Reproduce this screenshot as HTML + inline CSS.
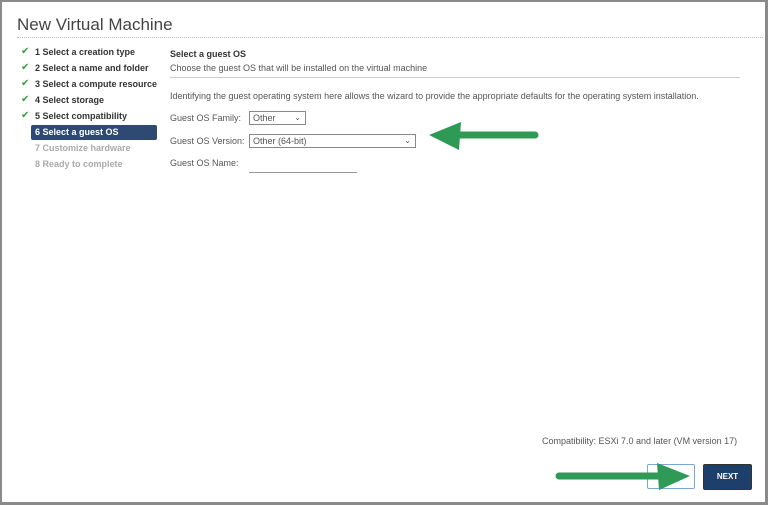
<!DOCTYPE html><html><head><style>
body{margin:0;width:768px;height:505px;background:#8a8a8a;font-family:"Liberation Sans",sans-serif;overflow:hidden;position:relative}
.win{position:absolute;left:2px;top:2px;width:763px;height:500px;background:#fff}
.a{position:absolute;white-space:nowrap}
.s{font-size:9px;color:#333;font-weight:bold}
.g{color:#aaa}
.ck{color:#3a9a3a;font-size:10px;position:absolute;left:21px}
.t{font-size:9px;color:#555}
</style></head><body><div class="win"></div>
<div class="a" style="left:17px;top:15px;font-size:17px;color:#444">New Virtual Machine</div>
<div class="a" style="left:17px;top:37px;width:746px;border-top:1px dotted #bbb"></div>
<div class="a" style="left:31px;top:125px;width:126px;height:15px;background:#2e4a72;border-radius:2px"></div>
<span class="ck" style="top:46px">✔</span><div class="a s" style="left:35px;top:47px">1 Select a creation type</div>
<span class="ck" style="top:62px">✔</span><div class="a s" style="left:35px;top:63px">2 Select a name and folder</div>
<span class="ck" style="top:78px">✔</span><div class="a s" style="left:35px;top:79px">3 Select a compute resource</div>
<span class="ck" style="top:94px">✔</span><div class="a s" style="left:35px;top:95px">4 Select storage</div>
<span class="ck" style="top:110px">✔</span><div class="a s" style="left:35px;top:111px">5 Select compatibility</div>
<div class="a s" style="left:35px;top:127px;color:#fff">6 Select a guest OS</div>
<div class="a s g" style="left:35px;top:143px">7 Customize hardware</div>
<div class="a s g" style="left:35px;top:159px">8 Ready to complete</div>
<div class="a s" style="left:170px;top:49px">Select a guest OS</div>
<div class="a t" style="left:170px;top:63px">Choose the guest OS that will be installed on the virtual machine</div>
<div class="a" style="left:170px;top:77px;width:570px;border-top:1px solid #ccc"></div>
<div class="a t" style="left:170px;top:91px">Identifying the guest operating system here allows the wizard to provide the appropriate defaults for the operating system installation.</div>
<div class="a t" style="left:170px;top:113px">Guest OS Family:</div>
<div class="a t" style="left:249px;top:111px;width:52px;height:12px;border:1px solid #888;font-size:9px;padding-left:3px;line-height:12px;box-sizing:content-box">Other<span style="position:absolute;right:4px;font-size:8px">⌄</span></div>
<div class="a t" style="left:170px;top:136px">Guest OS Version:</div>
<div class="a t" style="left:249px;top:134px;width:162px;height:12px;border:1px solid #888;padding-left:3px;line-height:12px">Other (64-bit)<span style="position:absolute;right:4px;font-size:8px">⌄</span></div>
<div class="a t" style="left:170px;top:158px">Guest OS Name:</div>
<div class="a" style="left:249px;top:172px;width:108px;border-top:1px solid #999"></div>
<svg class="a" style="left:425px;top:120px" width="115" height="32"><path d="M110 15 L30 15" stroke="#2e9a55" stroke-width="7" stroke-linecap="round"/><path d="M4 15 L36 2 L34 30 Z" fill="#2e9a55"/></svg>
<div class="a t" style="left:542px;top:436px">Compatibility: ESXi 7.0 and later (VM version 17)</div>
<div class="a" style="left:647px;top:464px;width:46px;height:23px;border:1px solid #7aa7d8;border-radius:2px"></div>
<div class="a" style="left:703px;top:464px;width:47px;height:24px;background:#1d3f6b;border:1px solid #333;border-radius:2px;color:#fff;font-size:8px;font-weight:bold;text-align:center;line-height:24px">NEXT</div>
<svg class="a" style="left:555px;top:462px" width="140" height="30"><path d="M4 14 L105 14" stroke="#2e9a55" stroke-width="7" stroke-linecap="round"/><path d="M135 14 L102 1 L104 28 Z" fill="#2e9a55"/></svg>
</body></html>
